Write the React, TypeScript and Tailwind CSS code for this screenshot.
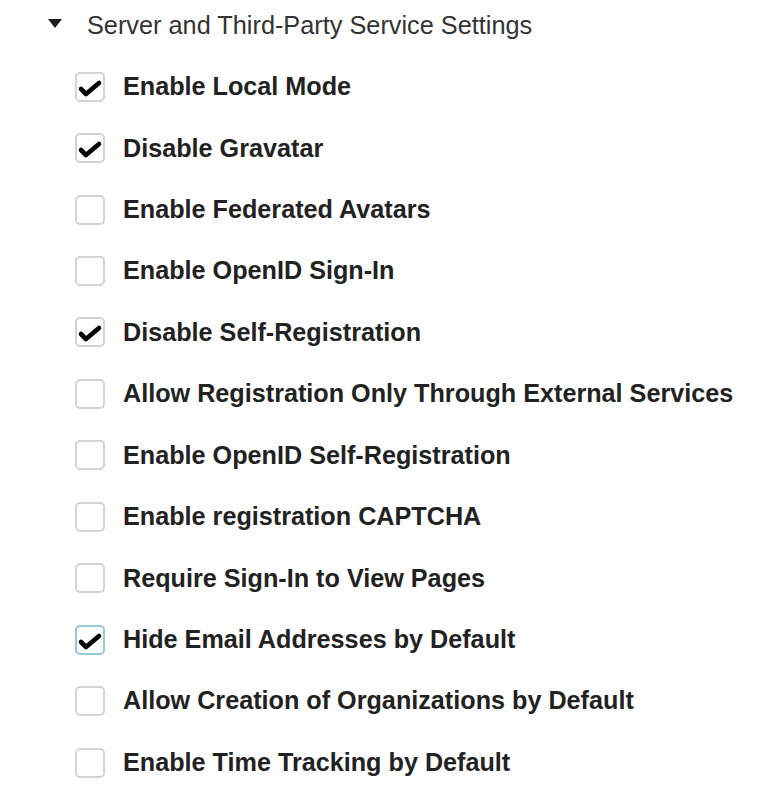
const settings: { label: string; checked: boolean; focus?: boolean }[] = [
  { label: 'Enable Local Mode', checked: true },
  { label: 'Disable Gravatar', checked: true },
  { label: 'Enable Federated Avatars', checked: false },
  { label: 'Enable OpenID Sign-In', checked: false },
  { label: 'Disable Self-Registration', checked: true },
  { label: 'Allow Registration Only Through External Services', checked: false },
  { label: 'Enable OpenID Self-Registration', checked: false },
  { label: 'Enable registration CAPTCHA', checked: false },
  { label: 'Require Sign-In to View Pages', checked: false },
  { label: 'Hide Email Addresses by Default', checked: true, focus: true },
  { label: 'Allow Creation of Organizations by Default', checked: false },
  { label: 'Enable Time Tracking by Default', checked: false },
];

function Checkbox({ checked, focus }: { checked: boolean; focus?: boolean }) {
  return (
    <div
      className={`w-[30px] h-[30px] shrink-0 rounded-[5px] border-2 bg-white ${
        focus ? 'border-[#96c8dc]' : 'border-[#d4d4d5]'
      }`}
    >
      {checked && (
        <svg width="26" height="26" viewBox="0 0 26 26" className="block">
          <path d="M4 15 L9 20 L22 9" fill="none" stroke="#000" strokeWidth="4.6" strokeLinecap="round" strokeLinejoin="round" />
        </svg>
      )}
    </div>
  );
}

export default function App() {
  return (
    <div className="w-[768px] h-[795px] bg-white text-[#333] font-['Liberation_Sans',Arial,sans-serif] overflow-hidden">
      <div className="h-[52px] flex items-center pl-[48px]">
        <svg width="14" height="9" viewBox="0 0 14 9" className="shrink-0 -mt-[5px]">
          <path d="M0 0 H14 L7 9 Z" fill="#1b1c1d" />
        </svg>
        <span className="ml-[25px] text-[25.3px] leading-none">Server and Third-Party Service Settings</span>
      </div>
      <div className="pt-[4px] pl-[75px]">
        {settings.map((s) => (
          <div key={s.label} className="h-[61.45px] flex items-center gap-[18px]">
            <Checkbox checked={s.checked} focus={s.focus} />
            <span className="text-[25.2px] font-bold leading-none text-[#222]">{s.label}</span>
          </div>
        ))}
      </div>
    </div>
  );
}
